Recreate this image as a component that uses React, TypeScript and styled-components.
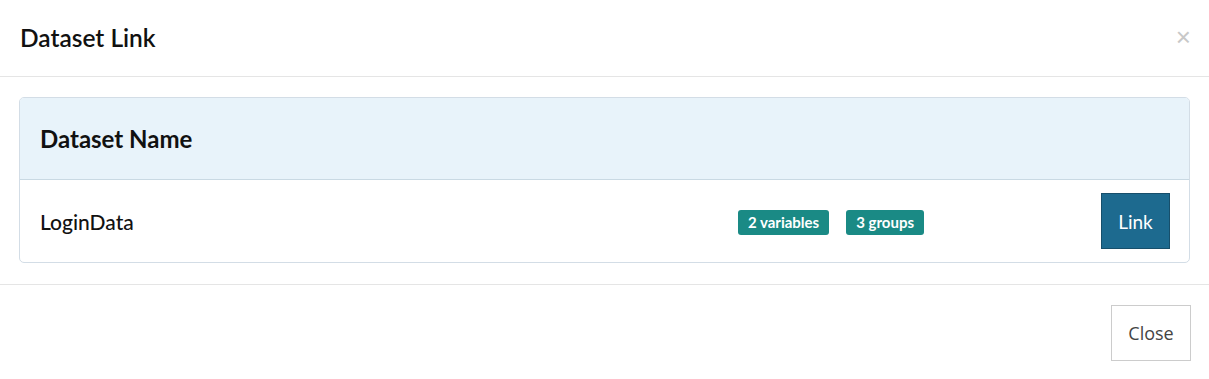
import styled, { createGlobalStyle } from 'styled-components';

const GlobalStyle = createGlobalStyle`
    body {
        margin: 0;
        background: #fff;
        font-family: Lato, "Open Sans", sans-serif;
        color: #111;
    }
`;

function App() {
    return (
        <>
            <GlobalStyle />
            <Modal>
                <ModalHeader>
                    <Title>Dataset Link</Title>
                    <CloseX aria-label="close">×</CloseX>
                </ModalHeader>
                <ModalBody>
                    <Panel>
                        <PanelHeading>Dataset Name</PanelHeading>
                        <Row>
                            <DatasetName>LoginData</DatasetName>
                            <Badges>
                                <Badge>2 variables</Badge>
                                <Badge>3 groups</Badge>
                            </Badges>
                            <LinkButton>Link</LinkButton>
                        </Row>
                    </Panel>
                </ModalBody>
                <ModalFooter>
                    <CloseButton>Close</CloseButton>
                </ModalFooter>
            </Modal>
        </>
    )
}

const Modal = styled.div`
    width: 100%;
    display: flex;
    flex-direction: column;
`;

const ModalHeader = styled.div`
    height: 77px;
    box-sizing: border-box;
    display: flex;
    align-items: center;
    justify-content: space-between;
    padding: 0 20px 2px 20px;
    border-bottom: 1px solid #e5e5e5;
`;

const Title = styled.h4`
    margin: 0;
    font-size: 24.5px;
    font-weight: 600;
    color: #111;
`;

const CloseX = styled.span`
    font-family: "Liberation Sans", sans-serif;
    font-size: 26px;
    color: #c8c8c8;
    line-height: 1;
    margin-right: -2px;
`;

const ModalBody = styled.div`
    padding: 20px 19px 21px 19px;
    border-bottom: 1px solid #e5e5e5;
`;

const Panel = styled.div`
    border: 1px solid #d3dde6;
    border-radius: 5px;
    overflow: hidden;
`;

const PanelHeading = styled.div`
    height: 82px;
    box-sizing: border-box;
    display: flex;
    align-items: center;
    padding: 0 20px 1px;
    background: #e8f3fa;
    border-bottom: 1px solid #c9d9e3;
    font-size: 24px;
    font-weight: 700;
`;

const Row = styled.div`
    height: 82px;
    box-sizing: border-box;
    display: grid;
    grid-template-columns: 1fr auto auto;
    align-items: center;
    padding: 0 19px 0 20px;
`;

const DatasetName = styled.div`
    font-size: 21px;
    font-weight: 500;
`;

const Badges = styled.div`
    display: flex;
    gap: 17px;
    margin: 3px 177px 0 0;
`;

const Badge = styled.span`
    display: inline-block;
    height: 25px;
    line-height: 25px;
    padding: 0 10px;
    border-radius: 3px;
    background: #1a8a85;
    color: #fff;
    font-size: 15px;
    font-weight: 700;
`;

const LinkButton = styled.button`
    width: 69px;
    height: 56px;
    background: #1d6a8f;
    border: 1px solid #174f6b;
    color: #fff;
    font-family: Lato, sans-serif;
    font-size: 19px;
    padding: 0;
`;

const ModalFooter = styled.div`
    display: flex;
    justify-content: flex-end;
    padding: 20px 18px 19px;
`;

const CloseButton = styled.button`
    width: 80px;
    height: 56px;
    background: #fff;
    border: 1px solid #ccc;
    color: #444;
    font-family: "Open Sans", sans-serif;
    font-size: 18px;
    padding: 0;
`;

export default App
